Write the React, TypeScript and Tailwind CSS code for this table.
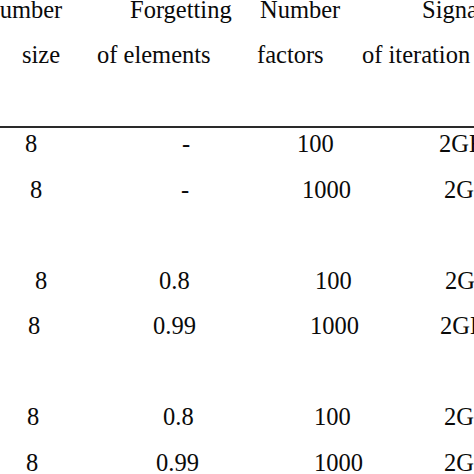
// Cropped results table: four columns, header on two lines, a rule under the
// header, and three groups of two data rows separated by blank rows.

type Cell = { text: string; pad: string }
type Row = Cell[] | null

const header: Row[] = [
  [
    { text: 'Number', pad: 'pl-[12px]' },
    { text: 'Forgetting', pad: 'pl-[40px]' },
    { text: 'Number', pad: 'pl-[10px]' },
    { text: 'Signature', pad: 'pl-[67px]' }
  ],
  [
    { text: 'size', pad: 'pl-[52px]' },
    { text: 'of elements', pad: 'pl-[7px]' },
    { text: 'factors', pad: 'pl-[7px]' },
    { text: 'of iteration', pad: 'pl-[7px]' }
  ]
]

const body: Row[] = [
  [
    { text: '8', pad: 'pl-[55px]' },
    { text: '-', pad: 'pl-[92px]' },
    { text: '100', pad: 'pl-[47px]' },
    { text: '2GHz', pad: 'pl-[84px]' }
  ],
  [
    { text: '8', pad: 'pl-[60px]' },
    { text: '-', pad: 'pl-[91px]' },
    { text: '1000', pad: 'pl-[52px]' },
    { text: '2GHz', pad: 'pl-[89px]' }
  ],
  null,
  [
    { text: '8', pad: 'pl-[65px]' },
    { text: '0.8', pad: 'pl-[69px]' },
    { text: '100', pad: 'pl-[65px]' },
    { text: '2GHz', pad: 'pl-[90px]' }
  ],
  [
    { text: '8', pad: 'pl-[58px]' },
    { text: '0.99', pad: 'pl-[63px]' },
    { text: '1000', pad: 'pl-[60px]' },
    { text: '2GHz', pad: 'pl-[85px]' }
  ],
  null,
  [
    { text: '8', pad: 'pl-[57px]' },
    { text: '0.8', pad: 'pl-[73px]' },
    { text: '100', pad: 'pl-[64px]' },
    { text: '2GHz', pad: 'pl-[89px]' }
  ],
  [
    { text: '8', pad: 'pl-[56px]' },
    { text: '0.99', pad: 'pl-[66px]' },
    { text: '1000', pad: 'pl-[64px]' },
    { text: '2GHz', pad: 'pl-[89px]' }
  ]
]

function TableRow({ row, height }: { row: Row; height: string }) {
  return (
    <div className={`grid grid-cols-[120px_160px_105px_245px] ${height} leading-[32px]`}>
      {row?.map((cell, i) => (
        <div key={i} className={`${cell.pad} whitespace-nowrap`}>
          {cell.text}
        </div>
      ))}
    </div>
  )
}

export default function App() {
  return (
    <div className="h-[474px] w-[474px] overflow-hidden bg-white">
      <div className="-mt-[6px] -ml-[30px] w-[630px] font-['Liberation_Serif','Times_New_Roman',serif] text-[24.5px] text-[#0a0a0a]">
        {header.map((row, i) => (
          <TableRow key={i} row={row} height="h-[45px]" />
        ))}
        <div className="h-[42px]" />
        <div className="h-[2px] bg-[#2a2a2a]" />
        {body.map((row, i) => (
          <TableRow key={i} row={row} height="h-[45.5px]" />
        ))}
      </div>
    </div>
  )
}
